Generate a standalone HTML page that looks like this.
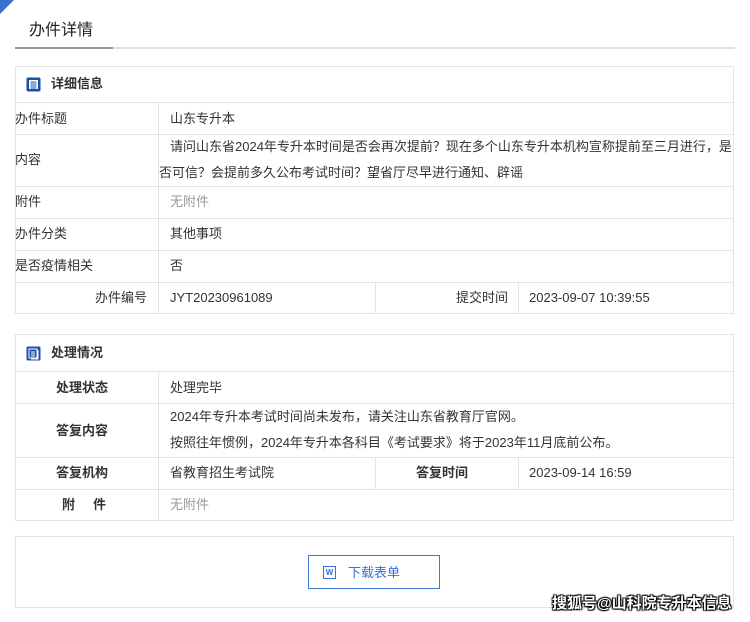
<!DOCTYPE html>
<html><head><meta charset="utf-8"><style>
body{margin:0;width:750px;height:622px;background:#fff;font-family:"Liberation Sans","Noto Sans CJK SC",sans-serif;font-size:13px;color:#333;position:relative;overflow:hidden}
.a{position:absolute}
.box{position:absolute;left:15px;width:719px;border:1px solid #e4e4e4;box-sizing:border-box}
.hl{position:absolute;left:0;right:0;height:1px;background:#e4e4e4}
.vl{position:absolute;width:1px;background:#e4e4e4}
.t{position:absolute;white-space:nowrap;line-height:16px}
.b{font-weight:bold}
</style></head><body>
<div class="a" style="left:0;top:0;width:0;height:0;border-top:14px solid #3b6fd0;border-right:14px solid transparent"></div>
<div class="t" style="left:29px;top:23px;font-size:16px;color:#222">办件详情</div>
<div class="a" style="left:15px;top:47px;width:720px;height:2px;background:#e0e0e0"></div>
<div class="a" style="left:15px;top:47px;width:98px;height:2px;background:#999"></div>

<div class="box" style="top:66px;height:248px">
 <div class="hl" style="top:35px"></div><div class="hl" style="top:67px"></div><div class="hl" style="top:119px"></div><div class="hl" style="top:151px"></div><div class="hl" style="top:183px"></div><div class="hl" style="top:215px"></div>
 <div class="vl" style="left:142px;top:35px;height:212px"></div>
 <div class="vl" style="left:359px;top:215px;height:32px"></div>
 <div class="vl" style="left:502px;top:215px;height:32px"></div>
</div>
<svg class="a" style="left:26px;top:77px" width="15" height="15"><rect x="0.5" y="0.5" width="14" height="14" rx="1.5" fill="#1a4fa8"/><rect x="3" y="3" width="9" height="9" fill="#fff"/><path d="M4.5 5h6M4.5 7h6M4.5 9h6M4.5 11h6" stroke="#1a4fa8" stroke-width="1"/></svg>
<div class="t b" style="left:51px;top:76px">详细信息</div>
<div class="t" style="left:15px;top:111px">办件标题</div><div class="t" style="left:170px;top:111px">山东专升本</div>
<div class="t" style="left:15px;top:152px">内容</div>
<div class="t" style="left:170px;top:139px">请问山东省2024年专升本时间是否会再次提前？现在多个山东专升本机构宣称提前至三月进行，是</div>
<div class="t" style="left:159px;top:165px">否可信？会提前多久公布考试时间？望省厅尽早进行通知、辟谣</div>
<div class="t" style="left:15px;top:194px">附件</div><div class="t" style="left:170px;top:194px;color:#999">无附件</div>
<div class="t" style="left:15px;top:226px">办件分类</div><div class="t" style="left:170px;top:226px">其他事项</div>
<div class="t" style="left:15px;top:258px">是否疫情相关</div><div class="t" style="left:170px;top:258px">否</div>
<div class="t" style="left:95px;top:290px">办件编号</div><div class="t" style="left:170px;top:290px">JYT20230961089</div>
<div class="t" style="left:456px;top:290px">提交时间</div><div class="t" style="left:529px;top:290px">2023-09-07 10:39:55</div>

<div class="box" style="top:334px;height:187px">
 <div class="hl" style="top:36px"></div><div class="hl" style="top:68px"></div><div class="hl" style="top:122px"></div><div class="hl" style="top:154px"></div>
 <div class="vl" style="left:142px;top:36px;height:150px"></div>
 <div class="vl" style="left:359px;top:122px;height:32px"></div>
 <div class="vl" style="left:502px;top:122px;height:32px"></div>
</div>
<svg class="a" style="left:26px;top:346px" width="15" height="15"><rect x="0.5" y="0.5" width="14" height="14" rx="1.5" fill="#1a4fa8"/><rect x="3" y="3" width="8" height="9" fill="none" stroke="#fff" stroke-width="1"/><path d="M5 6h4M5 8h4M5 10h4M12 4v9H5" stroke="#fff" stroke-width="1" fill="none"/></svg>
<div class="t b" style="left:51px;top:345px">处理情况</div>
<div class="t b" style="left:56px;top:380px">处理状态</div><div class="t" style="left:170px;top:380px">处理完毕</div>
<div class="t b" style="left:56px;top:423px">答复内容</div>
<div class="t" style="left:170px;top:409px">2024年专升本考试时间尚未发布，请关注山东省教育厅官网。</div>
<div class="t" style="left:170px;top:435px">按照往年惯例，2024年专升本各科目《考试要求》将于2023年11月底前公布。</div>
<div class="t b" style="left:56px;top:465px">答复机构</div><div class="t" style="left:170px;top:465px">省教育招生考试院</div>
<div class="t b" style="left:416px;top:465px">答复时间</div><div class="t" style="left:529px;top:465px">2023-09-14 16:59</div>
<div class="t b" style="left:62px;top:497px">附&nbsp;&nbsp;&nbsp;&nbsp;&nbsp;件</div><div class="t" style="left:170px;top:497px;color:#999">无附件</div>

<div class="box" style="top:536px;height:72px"></div>
<div class="a" style="left:308px;top:555px;width:132px;height:34px;border:1px solid #3b7bd6;box-sizing:border-box"></div>
<div class="a" style="left:323px;top:566px;width:13px;height:13px;border:1px solid #3b6fd0;box-sizing:border-box;font-size:8px;font-weight:bold;color:#3b6fd0;text-align:center;line-height:11px">W</div>
<div class="t" style="left:348px;top:565px;color:#3b6fd0">下载表单</div>
<div class="t" style="left:552px;top:596px;font-size:15px;font-weight:bold;color:#fff;text-shadow:0 0 1px #000,1px 1px 1px #000,-1px -1px 1px #000,1px -1px 1px #000,-1px 1px 1px #000">搜狐号@山科院专升本信息</div>
</body></html>
